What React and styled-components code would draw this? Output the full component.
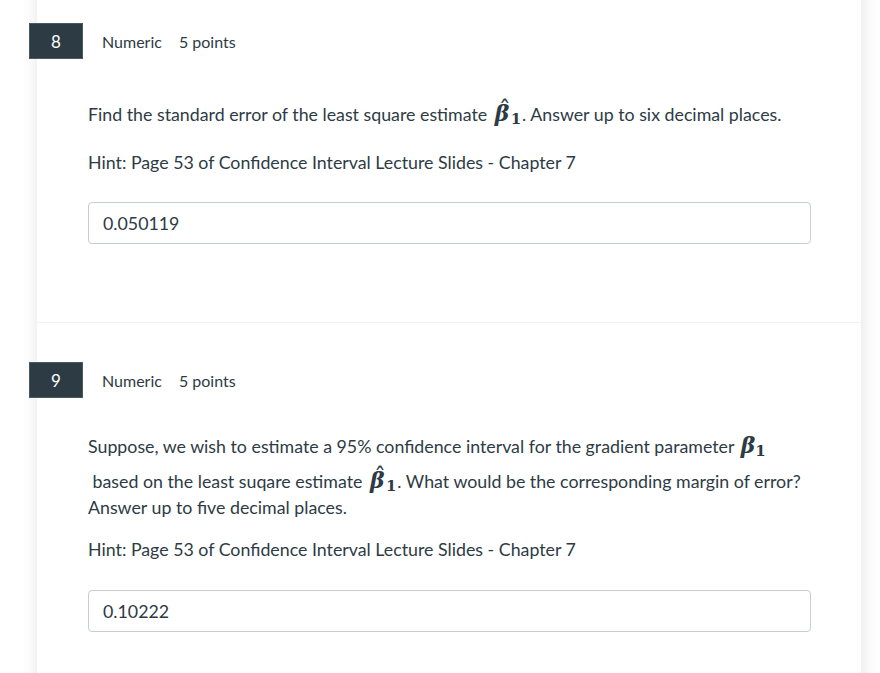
import React from "react";
import styled, { createGlobalStyle } from "styled-components";

const Global = createGlobalStyle`
  html, body { margin: 0; padding: 0; background: #ffffff; }
  body { font-family: Lato, "Noto Sans", sans-serif; color: #2d3b45; overflow: hidden; }
`;

const Page = styled.div`
  width: 880px;
  height: 673px;
  overflow: hidden;
  padding-left: 37px;
  box-sizing: border-box;
`;

const Card = styled.div`
  width: 824px;
  margin-top: -16px;
  background: #fff;
  box-shadow: -3px 0 14px rgba(0, 0, 0, 0.05), 4px 0 16px rgba(0, 0, 0, 0.07);
`;

const Question = styled.section`
  padding: 39px 50px 78px 51px;
  border-top: ${(p) => (p.$first ? "none" : "1px solid #f2f2f2")};
`;

const Header = styled.div`
  display: flex;
  align-items: center;
  margin-left: -59px;
  height: 36px;
  font-size: 16px;
`;

const Badge = styled.div`
  width: 54px;
  height: 36px;
  background: #2d3b45;
  color: #fff;
  display: flex;
  align-items: center;
  justify-content: center;
  font-size: 17px;
  box-sizing: border-box;
  border: 1px solid #4a5962;
  margin-right: 19px;
`;

const Meta = styled.span`
  margin-right: 17px;
`;

const Body = styled.div`
  margin-top: ${(p) => p.$top}px;
  font-size: 17.8px;
  line-height: 26px;
`;

const P = styled.p`
  margin: 0 0 ${(p) => p.$mb || 0}px 0;
`;

const Math = styled.span`
  font-family: "DejaVu Serif", serif;
  font-weight: bold;
  display: inline-block;
  line-height: 1;
  margin: 0 1px 0 2px;
`;

const Letter = styled.span`
  display: inline-block;
  font-style: italic;
  font-size: 22px;
  text-align: center;
`;

const Hat = styled.span`
  display: block;
  height: 10px;
  line-height: 36px;
  font-size: 24px;
  font-style: normal;
  font-weight: normal;
  padding-left: 5px;
`;

const Sub = styled.span`
  font-size: 15px;
  vertical-align: -3px;
`;

const Input = styled.div`
  margin-top: ${(p) => p.$top}px;
  height: 42px;
  border: 1px solid #c7cdd1;
  border-radius: 4px;
  box-sizing: border-box;
  padding-left: 14px;
  display: flex;
  align-items: center;
  font-size: 17.8px;
  color: #2d3b45;
`;

const Beta = ({ hat }) => (
  <Math>
    <Letter>
      {hat && <Hat>ˆ</Hat>}β
    </Letter>
    <Sub>1</Sub>
  </Math>
);

export default function App() {
  return (
    <Page>
      <Global />
      <Card>
        <Question $first>
          <Header>
            <Badge>8</Badge>
            <Meta>Numeric</Meta>
            <span>5 points</span>
          </Header>
          <Body $top={33}>
            <P $mb={22}>
              Find the standard error of the least square estimate <Beta hat />. Answer up to six decimal places.
            </P>
            <P>Hint: Page 53 of Confidence Interval Lecture Slides - Chapter 7</P>
          </Body>
          <Input $top={27}>0.050119</Input>
        </Question>
        <Question>
          <Header>
            <Badge>9</Badge>
            <Meta>Numeric</Meta>
            <span>5 points</span>
          </Header>
          <Body $top={35}>
            <P $mb={16}>
              Suppose, we wish to estimate a 95% confidence interval for the gradient parameter <Beta />
              <br />
              &nbsp;based on the least suqare estimate <Beta hat />. What would be the corresponding margin of error?
              <br />
              Answer up to five decimal places.
            </P>
            <P>Hint: Page 53 of Confidence Interval Lecture Slides - Chapter 7</P>
          </Body>
          <Input $top={28}>0.10222</Input>
        </Question>
      </Card>
    </Page>
  );
}
